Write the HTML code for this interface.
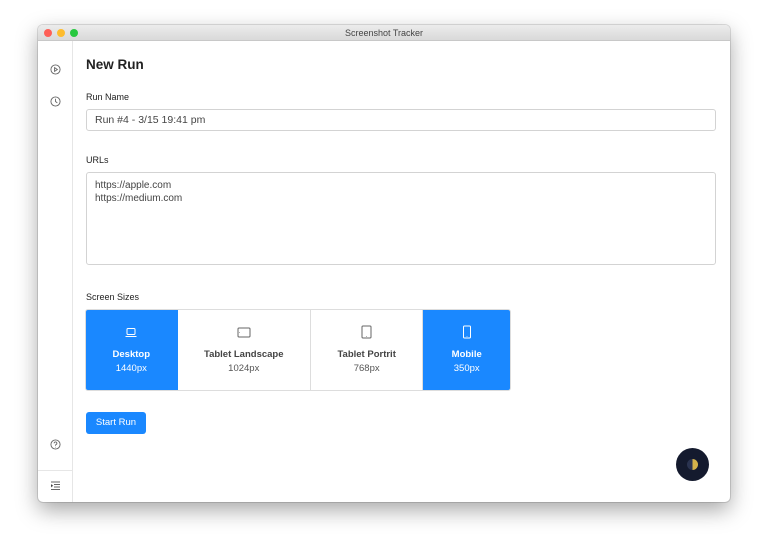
<!DOCTYPE html>
<html><head><style>
*{box-sizing:border-box;margin:0;padding:0}
body{width:768px;height:553px;background:#fff;font-family:"Liberation Sans",sans-serif;position:relative;overflow:hidden}
.win{position:absolute;left:38px;top:25px;width:692px;height:477px;background:#fff;border-radius:5px;box-shadow:0 8px 22px rgba(0,0,0,.35),0 0 0 1px rgba(0,0,0,.12);overflow:hidden}
.tb{height:16px;background:linear-gradient(#ececec,#d9d9d9);border-bottom:1px solid #c8c8c8;text-align:center;font-size:9px;line-height:16px;color:#444;position:relative}
.dot{position:absolute;top:4px;width:8px;height:8px;border-radius:50%}
.side{position:absolute;left:0;top:16px;width:35px;bottom:0;border-right:1px solid #e6e6e6}
.abs{position:absolute}
.lbl{position:absolute;left:48px;font-size:9px;color:#222}
.inp{position:absolute;left:48px;width:630px;border:1px solid #d3d3d3;border-radius:3px;font-size:10px;color:#444;padding:6px 8px;line-height:13px}
.sizes{position:absolute;left:47px;top:284px;height:82px;width:426px;display:flex;border:1px solid #ddd;border-radius:3px;overflow:hidden}
.s{text-align:center;font-size:9.5px;color:#555;border-right:1px solid #ddd;position:relative}
.s .ic{height:16px;margin-top:14px;display:flex;align-items:center;justify-content:center}
.s b{display:block;margin-top:9px;margin-bottom:3px;color:#444}
.s.on{background:#1a88ff;color:#fff;border-color:#1a88ff}.s.on b{color:#fff}
</style></head><body>
<div class="win">
<div class="tb"><span class="dot" style="left:6px;background:#fe5f57"></span><span class="dot" style="left:19px;background:#febc2e"></span><span class="dot" style="left:32px;background:#28c840"></span>Screenshot Tracker</div>
<div class="side">
<svg class="abs" style="left:12px;top:23px" width="11" height="11" viewBox="0 0 12 12" fill="none" stroke="#666" stroke-width="1"><circle cx="6" cy="6" r="5"/><path d="M5 4v4l3-2z"/></svg>
<svg class="abs" style="left:12px;top:55px" width="11" height="11" viewBox="0 0 12 12" fill="none" stroke="#666" stroke-width="1"><circle cx="6" cy="6" r="5"/><path d="M6 3v3l2 1.5"/></svg>
<svg class="abs" style="left:12px;top:398px" width="11" height="11" viewBox="0 0 12 12" fill="none" stroke="#666" stroke-width="1"><circle cx="6" cy="6" r="5"/><path d="M4.5 4.7a1.5 1.5 0 1 1 2 1.4c-.5.2-.5.6-.5 1.2M6 8.6v.6"/></svg>
<div class="abs" style="left:0;top:429px;width:35px;border-top:1px solid #e6e6e6"></div>
<svg class="abs" style="left:13px;top:440px" width="9" height="9" viewBox="0 0 9 9" stroke="#666" stroke-width="1"><path d="M0 1h9M3 3.5h6M3 6h6M0 8.5h9M0 3.5l1.5 1.2L0 6"/></svg>
</div>
<div class="abs" style="left:48px;top:32px;font-size:13.5px;font-weight:bold;color:#222">New Run</div>
<div class="lbl" style="top:67px">Run Name</div>
<div class="inp" style="top:84px;height:22px;padding-top:4px;font-size:10.5px">Run #4 - 3/15 19:41 pm</div>
<div class="lbl" style="top:130px">URLs</div>
<div class="inp" style="top:147px;height:93px">https://apple.com<br>https://medium.com</div>
<div class="lbl" style="top:267px">Screen Sizes</div>
<div class="sizes">
<div class="s on" style="width:92px"><div class="ic"><svg width="12" height="11" viewBox="0 0 12 11" fill="none" stroke="#fff"><rect x="2" y="1.5" width="8" height="6" rx="1"/><path d="M.5 9.5h11"/></svg></div><b>Desktop</b>1440px</div>
<div class="s" style="width:134px"><div class="ic"><svg width="14" height="11" viewBox="0 0 14 11" fill="none" stroke="#666"><rect x="1" y="1" width="12" height="9" rx="1"/><path d="M2.5 5.5h.5"/></svg></div><b>Tablet Landscape</b>1024px</div>
<div class="s" style="width:113px"><div class="ic"><svg width="11" height="14" viewBox="0 0 11 14" fill="none" stroke="#666"><rect x="1" y="1" width="9" height="12" rx="1"/><path d="M5.5 11v.5"/></svg></div><b>Tablet Portrit</b>768px</div>
<div class="s on" style="width:87px;border-right:0"><div class="ic"><svg width="10" height="14" viewBox="0 0 10 14" fill="none" stroke="#fff"><rect x="1.5" y="1" width="7" height="12" rx="1"/><path d="M5 11v.5"/></svg></div><b>Mobile</b>350px</div>
</div>
<div class="abs" style="left:48px;top:387px;width:60px;height:22px;background:#1a88ff;border-radius:3px;color:#fff;font-size:9.5px;text-align:center;line-height:22px">Start Run</div>
<div class="abs" style="left:638px;top:423px;width:33px;height:33px;border-radius:50%;background:#141a2e"><div class="abs" style="left:11px;top:11px;width:11px;height:11px;border-radius:50%;background:linear-gradient(90deg,#2a3350 50%,#d4b24a 50%)"></div></div>
</div>
</body></html>
